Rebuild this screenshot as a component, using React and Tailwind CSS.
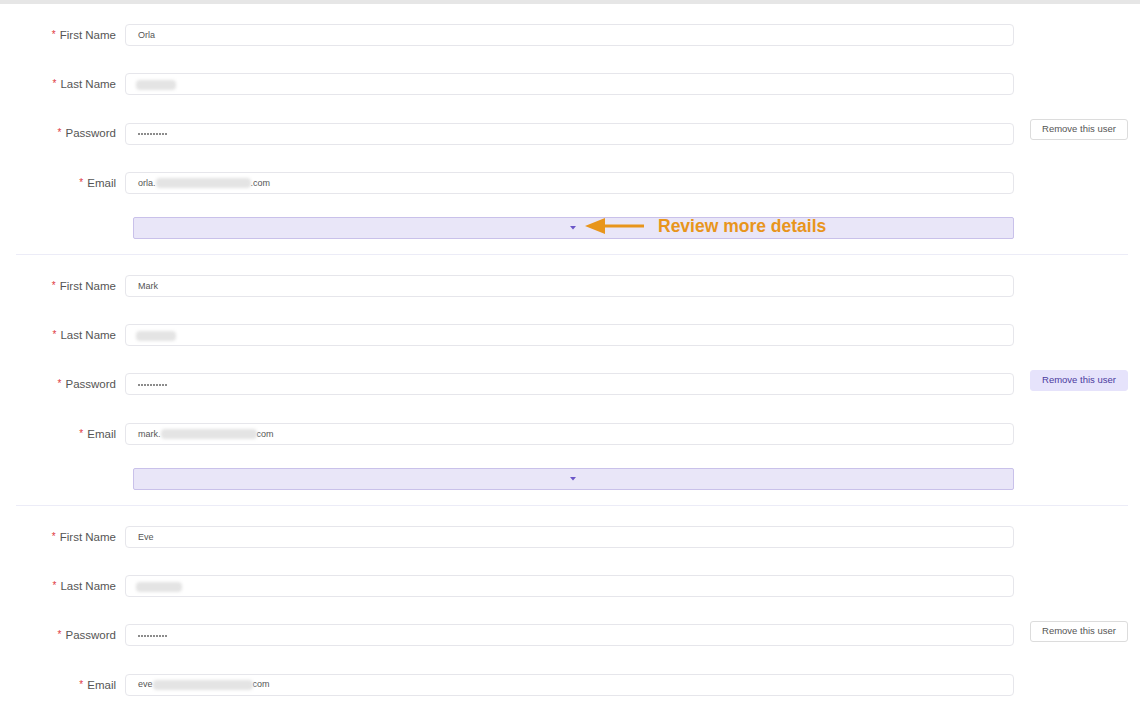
import React from "react";

const users = [
  { first: "Orla", lastW: 40, emailPre: "orla.", blurW: 95, emailPost: ".com", active: false, note: true },
  { first: "Mark", lastW: 40, emailPre: "mark.", blurW: 96, emailPost: "com", active: true, note: false },
  { first: "Eve", lastW: 46, emailPre: "eve", blurW: 100, emailPost: "com", active: false, note: false },
];

const Blur = ({ w }) => (
  <span className="inline-block h-[10px] bg-[#e4e4e4] blur-[1.5px] rounded-sm" style={{ width: w }}></span>
);

const Dots = () => (
  <span className="flex gap-[1px]">
    {Array(10).fill(null).map((_, i) => (
      <span key={i} className="w-[2px] h-[2px] rounded-full bg-[#666]"></span>
    ))}
  </span>
);

const Field = ({ label, children }) => (
  <div className="flex items-center">
    <div className="w-[109px] pr-[9px] pt-[1px] text-right text-[11.5px] text-[#555]">
      <span className="text-[#e0393e] mr-[4px] text-[10px] relative top-[-1px]">*</span>
      {label}
    </div>
    <div className="flex-1 h-[22px] border border-[#e6e6eb] rounded-[4px] bg-white flex items-center pl-[12px] pt-[1px] text-[9px] text-[#555]">
      {children}
    </div>
  </div>
);

const UserBlock = ({ u, last }) => (
  <div className={"flex items-center pt-[20px] pb-[15px] " + (last ? "" : "border-b border-[#ececf7]")}>
    <div className="flex-1 flex flex-col">
      <div className="flex flex-col gap-[27.3px]">
        <Field label="First Name">{u.first}</Field>
        <Field label="Last Name">
          <span className="ml-[-2px] flex">
            <Blur w={u.lastW} />
          </span>
        </Field>
        <Field label="Password">
          <Dots />
        </Field>
        <Field label="Email">
          <span>{u.emailPre}</span>
          <Blur w={u.blurW} />
          <span>{u.emailPost}</span>
        </Field>
      </div>
      <div className="relative ml-[117px] mt-[23px] h-[22px] bg-[#e9e6f8] border border-[#c9c1ea] rounded-[2px] flex items-center justify-center">
        <svg width="6" height="4" viewBox="0 0 6 4" className="ml-[-2px]">
          <path d="M0 0 L6 0 L3 3.5 Z" fill="#6b56c8" />
        </svg>
        {u.note && (
          <div className="absolute left-[451px] top-[-5px] flex items-center">
            <svg width="60" height="20" viewBox="0 0 60 20">
              <path d="M0 10 L20 2 L20 18 Z" fill="#e8951c" />
              <rect x="18" y="8.5" width="41" height="3" fill="#e8951c" />
            </svg>
            <span className="ml-[13px] text-[17.5px] font-bold text-[#e8951c] whitespace-nowrap">Review more details</span>
          </div>
        )}
      </div>
    </div>
    <div className="w-[114px] flex justify-end pb-[4px]">
      <button
        className={
          "w-[98px] h-[21px] rounded-[3px] text-[9.5px] " +
          (u.active ? "bg-[#e6e3fb] text-[#4b3a9e] border border-[#e6e3fb]" : "bg-white text-[#555] border border-[#dcdcdc]")
        }
      >
        Remove this user
      </button>
    </div>
  </div>
);

export default function App() {
  return (
    <div className="w-[1140px] h-[702px] overflow-hidden bg-white" style={{ fontFamily: '"Liberation Sans", Arial, sans-serif' }}>
      <div className="h-[4px] bg-[#e6e6e6]"></div>
      <div className="px-[16px] pr-[12px]">
        {users.map((u, i) => (
          <UserBlock key={i} u={u} last={i === users.length - 1} />
        ))}
      </div>
    </div>
  );
}
